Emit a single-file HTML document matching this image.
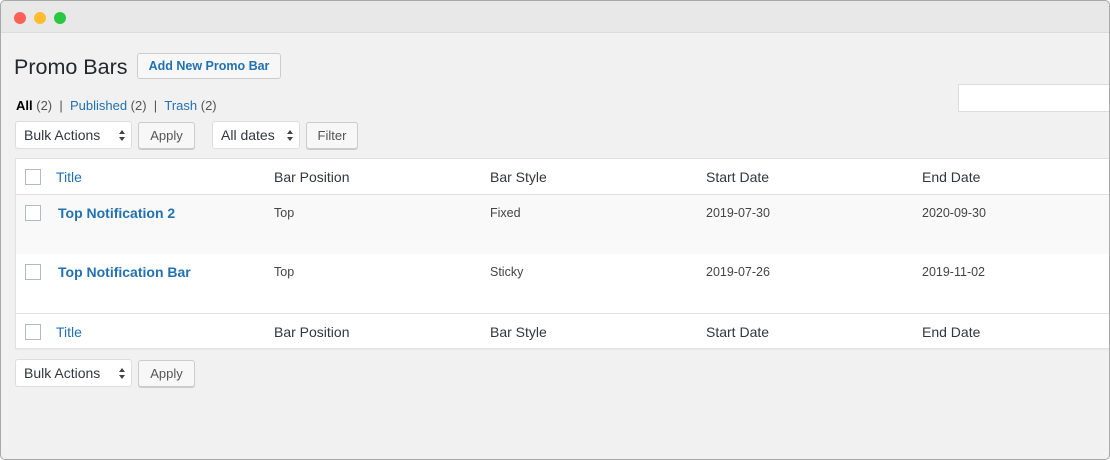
<!DOCTYPE html>
<html><head><style>
*{box-sizing:border-box;margin:0;padding:0}
body{width:1110px;height:460px;overflow:hidden;background:#fff;font-family:"Liberation Sans",sans-serif;font-size:13px;color:#32373c}
.win{position:absolute;left:0;top:0;width:1110px;height:460px;border-radius:5px;background:#f1f1f1;overflow:hidden}
.frame{position:absolute;left:0;top:0;width:1110px;height:460px;border:1px solid #a9a9a9;border-radius:5px}
.tb{position:absolute;left:0;top:0;width:100%;height:33px;background:#e8e8e8;border-bottom:1px solid #dcdcdc}
.dot{position:absolute;top:12px;width:12px;height:12px;border-radius:50%}
.a{position:absolute;white-space:nowrap}
.btn{position:absolute;border:1px solid #ccc;background:#f7f7f7;border-radius:3px;box-shadow:0 1px 0 #ccc;font-size:13px;color:#555;text-align:center}
.sel{position:absolute;border:1px solid #ddd;background:#fff;border-radius:3px;font-size:14px;color:#32373c;padding-left:8px}
.sel:after{content:"";position:absolute;right:6px;top:8px;border:3.5px solid transparent;border-bottom:4px solid #444;border-top:0}
.sel:before{content:"";position:absolute;right:6px;top:15px;border:3.5px solid transparent;border-top:4px solid #444;border-bottom:0}
.blue{color:#2271b1}
.cb{position:absolute;left:25px;width:16px;height:16px;border:1px solid #b4b9be;background:#fff}
.th{font-size:14px}
.td{font-size:12.5px;color:#444}
</style></head><body>
<div class="win">
<div class="tb"><div class="dot" style="left:14px;background:#fe5f57"></div><div class="dot" style="left:34px;background:#febc2e"></div><div class="dot" style="left:54px;background:#28c840"></div></div>
<div class="a" style="left:14px;top:55px;font-size:21.5px;color:#23282d">Promo Bars</div>
<div class="btn" style="left:137px;top:53px;width:144px;height:26px;line-height:25px;color:#2271b1;font-weight:bold;font-size:12.5px;box-shadow:none">Add New Promo Bar</div>
<div class="a" style="left:16px;top:98px;color:#555"><b style="color:#000">All</b> (2) &nbsp;| &nbsp;<span class="blue">Published</span> (2) &nbsp;| &nbsp;<span class="blue">Trash</span> (2)</div>
<div style="position:absolute;left:958px;top:84px;width:160px;height:28px;border:1px solid #ddd;background:#fff"></div>
<div class="sel" style="left:15px;top:121px;width:117px;height:28px;line-height:27px">Bulk Actions</div>
<div class="btn" style="left:138px;top:122px;width:57px;height:27px;line-height:26px">Apply</div>
<div class="sel" style="left:212px;top:121px;width:88px;height:28px;line-height:27px">All dates</div>
<div class="btn" style="left:306px;top:122px;width:52px;height:27px;line-height:26px">Filter</div>
<div style="position:absolute;left:15px;top:158px;width:1100px;height:191px;background:#fff;border:1px solid #e1e1e1;box-shadow:0 1px 1px rgba(0,0,0,.04)"></div>
<div style="position:absolute;left:16px;top:194px;width:1100px;height:1px;background:#e1e1e1"></div>
<div style="position:absolute;left:16px;top:195px;width:1100px;height:59px;background:#f9f9f9"></div>
<div style="position:absolute;left:16px;top:313px;width:1100px;height:1px;background:#e1e1e1"></div>
<div class="cb" style="top:169px"></div><div class="cb" style="top:205px"></div><div class="cb" style="top:264px"></div><div class="cb" style="top:324px"></div>
<div class="a th blue" style="left:56px;top:169px">Title</div>
<div class="a th" style="left:274px;top:169px">Bar Position</div>
<div class="a th" style="left:490px;top:169px">Bar Style</div>
<div class="a th" style="left:706px;top:169px">Start Date</div>
<div class="a th" style="left:922px;top:169px">End Date</div>
<div class="a blue" style="left:58px;top:205px;font-size:14px;font-weight:bold">Top Notification 2</div>
<div class="a td" style="left:274px;top:206px">Top</div>
<div class="a td" style="left:490px;top:206px">Fixed</div>
<div class="a td" style="left:706px;top:206px">2019-07-30</div>
<div class="a td" style="left:922px;top:206px">2020-09-30</div>
<div class="a blue" style="left:58px;top:264px;font-size:14px;font-weight:bold">Top Notification Bar</div>
<div class="a td" style="left:274px;top:265px">Top</div>
<div class="a td" style="left:490px;top:265px">Sticky</div>
<div class="a td" style="left:706px;top:265px">2019-07-26</div>
<div class="a td" style="left:922px;top:265px">2019-11-02</div>
<div class="a th blue" style="left:56px;top:324px">Title</div>
<div class="a th" style="left:274px;top:324px">Bar Position</div>
<div class="a th" style="left:490px;top:324px">Bar Style</div>
<div class="a th" style="left:706px;top:324px">Start Date</div>
<div class="a th" style="left:922px;top:324px">End Date</div>
<div class="sel" style="left:15px;top:359px;width:117px;height:28px;line-height:27px">Bulk Actions</div>
<div class="btn" style="left:138px;top:360px;width:57px;height:27px;line-height:26px">Apply</div>
</div>
<div class="frame"></div>
</body></html>
